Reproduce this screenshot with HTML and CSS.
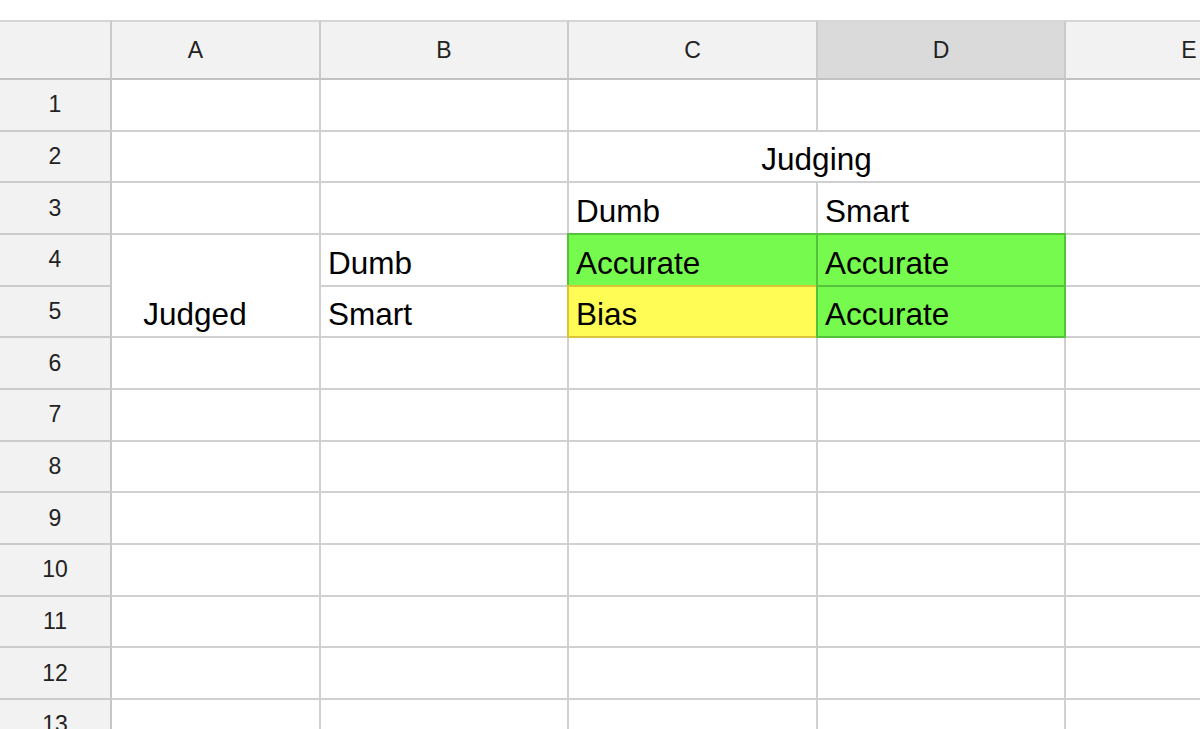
FILE: index.html
```html
<!DOCTYPE html>
<html>
<head>
<meta charset="utf-8">
<link rel="stylesheet" href="styles.css">
</head>
<body>
<div class="viewport">
  <div class="sheet">
    <div class="corner"></div>
    <div class="colh cola">A</div>
    <div class="colh">B</div>
    <div class="colh">C</div>
    <div class="colh sel">D</div>
    <div class="colh">E</div>

    <div class="rowh">1</div>
    <div class="cell cola"></div><div class="cell"></div><div class="cell"></div><div class="cell"></div><div class="cell"></div>

    <div class="rowh">2</div>
    <div class="cell cola"></div><div class="cell"></div>
    <div class="cell span2 center">Judging</div>
    <div class="cell"></div>

    <div class="rowh">3</div>
    <div class="cell cola"></div><div class="cell"></div>
    <div class="cell">Dumb</div><div class="cell">Smart</div><div class="cell"></div>

    <div class="rowh">4</div>
    <div class="cell cola rspan2 center">Judged</div>
    <div class="cell">Dumb</div>
    <div class="cell green">Accurate</div>
    <div class="cell green">Accurate</div>
    <div class="cell"></div>

    <div class="rowh">5</div>
    <div class="cell">Smart</div>
    <div class="cell yellow">Bias</div>
    <div class="cell green">Accurate</div>
    <div class="cell"></div>

    <div class="rowh">6</div>
    <div class="cell cola"></div><div class="cell"></div><div class="cell"></div><div class="cell"></div><div class="cell"></div>
    <div class="rowh">7</div>
    <div class="cell cola"></div><div class="cell"></div><div class="cell"></div><div class="cell"></div><div class="cell"></div>
    <div class="rowh">8</div>
    <div class="cell cola"></div><div class="cell"></div><div class="cell"></div><div class="cell"></div><div class="cell"></div>
    <div class="rowh">9</div>
    <div class="cell cola"></div><div class="cell"></div><div class="cell"></div><div class="cell"></div><div class="cell"></div>
    <div class="rowh">10</div>
    <div class="cell cola"></div><div class="cell"></div><div class="cell"></div><div class="cell"></div><div class="cell"></div>
    <div class="rowh">11</div>
    <div class="cell cola"></div><div class="cell"></div><div class="cell"></div><div class="cell"></div><div class="cell"></div>
    <div class="rowh">12</div>
    <div class="cell cola"></div><div class="cell"></div><div class="cell"></div><div class="cell"></div><div class="cell"></div>
    <div class="rowh">13</div>
    <div class="cell cola"></div><div class="cell"></div><div class="cell"></div><div class="cell"></div><div class="cell"></div>
  </div>
</div>
</body>
</html>
```
FILE: styles.css
```css
html, body {
  margin: 0;
  padding: 0;
  background: #ffffff;
}

.viewport {
  width: 1200px;
  height: 729px;
  overflow: hidden;
  padding-top: 20px;
  box-sizing: border-box;
  font-family: "Liberation Sans", Arial, sans-serif;
}

.sheet {
  display: grid;
  grid-template-columns: 112px 209px 248px 249px 248px 248px;
  grid-template-rows: 60px repeat(13, 51.667px);
  width: 1314px;
}

.corner,
.colh,
.rowh,
.cell {
  box-sizing: border-box;
  border-right: 2px solid #d0d0d0;
  border-bottom: 2px solid #d0d0d0;
}

.corner,
.colh {
  background: #f2f2f2;
  border-top: 2px solid #d6d6d6;
  border-bottom: 2px solid #c2c2c2;
  border-right-color: #cacaca;
}

.colh {
  display: flex;
  align-items: center;
  justify-content: center;
  font-size: 23px;
  color: #222222;
}

.colh.cola {
  padding-right: 40px;
}

.colh.sel {
  background: #dadada;
}

.rowh {
  background: #f2f2f2;
  border-right-color: #c6c6c6;
  border-bottom-color: #cbcbcb;
  display: flex;
  align-items: center;
  justify-content: center;
  font-size: 23px;
  color: #222222;
}

.cell {
  display: flex;
  align-items: flex-end;
  padding: 0 7px 6px 7px;
  font-size: 31.5px;
  line-height: 31px;
  color: #000000;
  white-space: nowrap;
  position: relative;
}

.cell.center {
  justify-content: center;
}

.cell.cola.center {
  padding-right: 48px;
}

.span2 {
  grid-column: span 2;
}

.rspan2 {
  grid-row: span 2;
}

.green {
  background: #76fa4e;
}

.yellow {
  background: #fffc55;
}

.green::after,
.yellow::after {
  content: "";
  position: absolute;
  top: -2px;
  left: -2px;
  right: -2px;
  bottom: -2px;
  border: 2px solid #55c23c;
  pointer-events: none;
}

.yellow::after {
  border-color: #d9c43a;
}
```
